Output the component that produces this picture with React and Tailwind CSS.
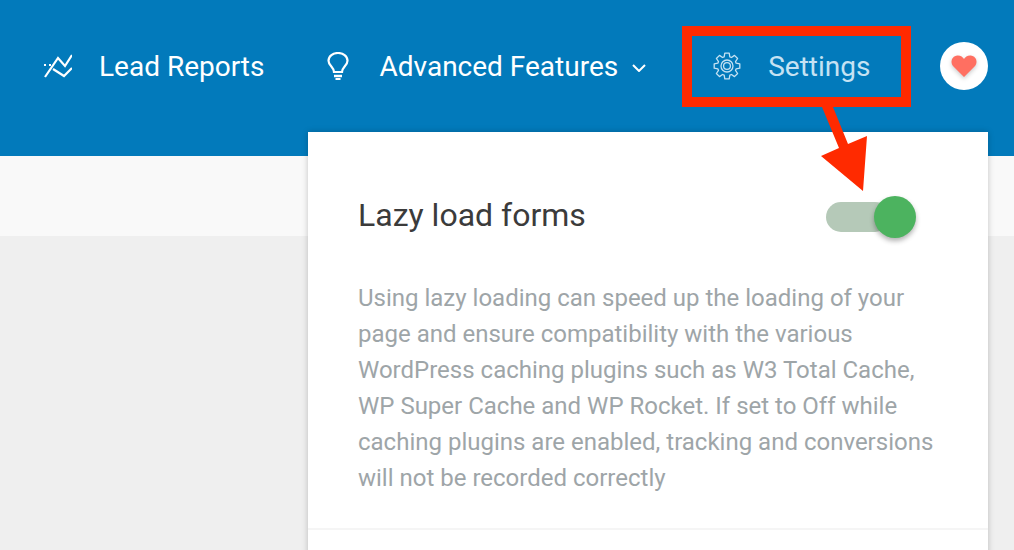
const NAV_TEXT = "text-[28px] leading-none font-normal";

// gear outline: 8 rounded teeth round the centre of a 28 box
const GEAR_PATH = Array.from({ length: 8 }, (_, i) => {
  const a = (i * Math.PI) / 4;
  const pt = (r, d) => `${(14 + r * Math.sin(a + d)).toFixed(2)} ${(14 - r * Math.cos(a + d)).toFixed(2)}`;
  return `${i === 0 ? "M" : "L"}${pt(9.6, -0.3)} L${pt(13, -0.17)} L${pt(13, 0.17)} L${pt(9.6, 0.3)}`;
}).join(" ") + " Z";

function TrendIcon() {
  return (
    <svg width="28" height="24" viewBox="0 0 28 24" fill="none" stroke="white" strokeWidth="2.2" className="block">
      <path d="M1 23 L14 4 L21 12 L28 1" />
      <path d="M9 15 L20 22 L28 14" />
      <path d="M0 11 L2 11" />
      <path d="M5 11 L7 11" />
    </svg>
  );
}

function BulbIcon() {
  return (
    <svg width="22" height="28" viewBox="0 0 22 28" fill="none" stroke="white" strokeWidth="2.2" className="block">
      <path d="M7 20 C7 15 1.5 13.5 1.5 8.8 C1.5 4 6 1 11 1 C16 1 20.5 4 20.5 8.8 C20.5 13.5 15 15 15 20 Z" />
      <path d="M7 24 L15 24" strokeWidth="2.5" />
      <path d="M8.5 27 L13.5 27" strokeWidth="2" />
    </svg>
  );
}

function GearIcon() {
  return (
    <svg width="28" height="28" viewBox="0 0 28 28" fill="none" stroke="#c5e2f3" strokeWidth="1.3" strokeLinejoin="round" className="block">
      <path d={GEAR_PATH} />
      <circle cx="14" cy="14" r="6" />
      <circle cx="14" cy="14" r="3.4" />
    </svg>
  );
}

function Chevron() {
  return (
    <svg width="14" height="8" viewBox="0 0 14 8" fill="none" stroke="white" strokeWidth="2" className="block">
      <path d="M1 1 L7 7 L13 1" />
    </svg>
  );
}

export default function App() {
  return (
    <div className="relative w-[1014px] h-[550px] overflow-hidden bg-[#efefef] font-['Roboto',sans-serif]">
      <header className="h-[156px] bg-[#027abb] flex items-start pt-[42px] text-white">
        <div className="ml-[44px] flex items-center h-[48px]">
          <TrendIcon />
          <span className={`ml-[27px] mt-[1px] ${NAV_TEXT}`}>Lead Reports</span>
        </div>
        <div className="ml-[63px] flex items-center h-[48px]">
          <BulbIcon />
          <span className={`ml-[30px] mt-[1px] ${NAV_TEXT}`}>Advanced Features</span>
          <span className="ml-[14px] mt-[4px]">
            <Chevron />
          </span>
        </div>
        <div className="ml-[67px] flex items-center h-[48px] text-[#c5e2f3]">
          <GearIcon />
          <span className={`ml-[27px] mt-[1px] ${NAV_TEXT}`}>Settings</span>
        </div>
        <div className="ml-[70px] w-[48px] h-[48px] rounded-full bg-white flex items-center justify-center">
          <svg width="26" height="22" viewBox="0 0 26 22" className="block drop-shadow-[0_2px_2px_rgba(0,0,0,0.2)]">
            <path d="M13 22 L2 11 C-1 7.5 0.5 1 6.5 0.5 C9.5 0.3 11.8 2 13 4 C14.2 2 16.5 0.3 19.5 0.5 C25.5 1 27 7.5 24 11 Z" fill="#ff6f61" />
          </svg>
        </div>
      </header>
      <div className="h-[80px] bg-[#f9f9f9]" />

      {/* dropdown panel */}
      <div className="absolute left-[308px] top-[132px] w-[680px] h-[460px] bg-white shadow-[0_0_6px_rgba(0,0,0,0.22)]">
        <div className="px-[50px] pt-[62px] border-b-2 border-[#f5f5f5] h-[398px]">
          <div className="flex items-center justify-between h-[42px]">
            <h3 className="text-[32px] leading-none font-normal text-[#3b3b3b]">Lazy load forms</h3>
            <div className="relative w-[90px] h-[42px] mr-[22px] mt-[4px]">
              <div className="absolute left-0 top-[6px] w-[64px] h-[30px] rounded-full bg-[#b5c9b8]" />
              <div className="absolute left-[48px] top-0 w-[42px] h-[42px] rounded-full bg-[#4cb35f] shadow-[0_3px_5px_rgba(0,0,0,0.3)]" />
            </div>
          </div>
          <p className="mt-[44px] text-[24px] leading-[36px] text-[#9ea5a8] whitespace-nowrap">
            Using lazy loading can speed up the loading of your
            <br />
            page and ensure compatibility with the various
            <br />
            WordPress caching plugins such as W3 Total Cache,
            <br />
            WP Super Cache and WP Rocket. If set to Off while
            <br />
            caching plugins are enabled, tracking and conversions
            <br />
            will not be recorded correctly
          </p>
        </div>
      </div>

      {/* red annotation */}
      <div className="absolute left-[682px] top-[26px] w-[229px] h-[81px] border-[10px] border-[#ff2a00]" />
      <svg width="60" height="90" viewBox="0 0 60 90" className="absolute left-[815px] top-[105px]">
        <path d="M7 2 L18 2 L33 39 L52 31 L48 86 L6 51 L24 43 Z" fill="#ff2a00" />
      </svg>
    </div>
  );
}
